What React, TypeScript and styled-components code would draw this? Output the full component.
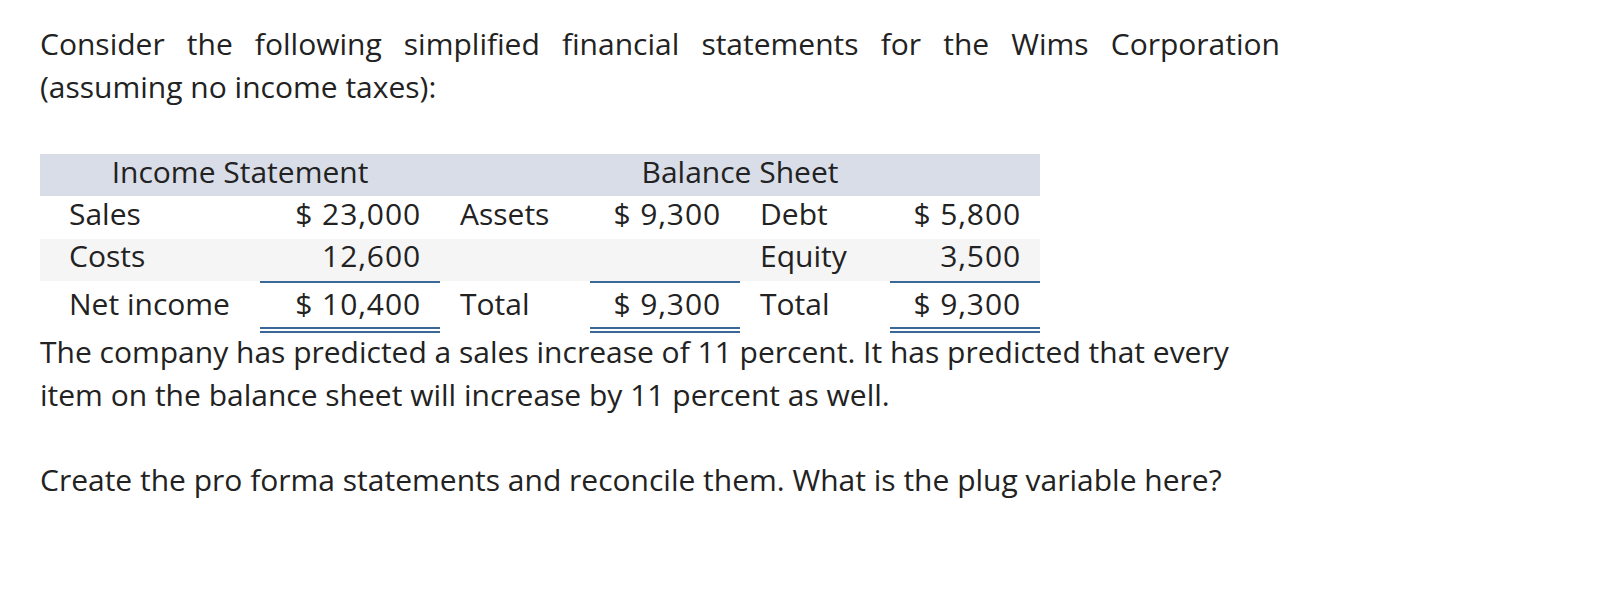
import React from 'react';
import styled, { createGlobalStyle } from 'styled-components';

const GlobalStyle = createGlobalStyle`
  body {
    margin: 0;
    background: #ffffff;
  }
`;

const Page = styled.div`
  width: 1240px;
  padding: 22px 0 0 40px;
  color: #222222;
  font-family: "Open Sans", "Noto Sans", sans-serif;
  font-size: 30px;
  line-height: 43px;
`;

const Paragraph = styled.p<{ $justify?: boolean; $gap?: number }>`
  margin: ${props => props.$gap || 0}px 0 0;
  text-align: ${props => (props.$justify ? 'justify' : 'left')};
`;

const Table = styled.table`
  width: 1000px;
  margin-top: 46px;
  border-collapse: separate;
  border-spacing: 0;
  table-layout: fixed;
  font-size: 30px;
`;

const HeadCell = styled.th`
  background-color: #d9dde8;
  font-weight: 400;
  text-align: center;
  vertical-align: top;
  line-height: 36px;
  padding: 0 0 6px;
`;

const Row = styled.tr<{ $shaded?: boolean }>`
  background-color: ${props => (props.$shaded ? '#f5f5f5' : 'transparent')};
`;

type RowKind = 'first' | 'middle' | 'total';

const rowMetrics: Record<RowKind, { lh: number; top: number; bottom: number }> = {
  first: { lh: 33, top: 1, bottom: 9 },
  middle: { lh: 34, top: 0, bottom: 8 },
  total: { lh: 34, top: 6, bottom: 12 },
};

const Cell = styled.td<{ $kind: RowKind; $amount?: boolean; $indent?: number; $ruled?: boolean }>`
  vertical-align: top;
  white-space: nowrap;
  text-align: ${props => (props.$amount ? 'right' : 'left')};
  letter-spacing: ${props => (props.$amount ? '0.9px' : 'normal')};
  line-height: ${props => rowMetrics[props.$kind].lh}px;
  padding-top: ${props => rowMetrics[props.$kind].top - (props.$ruled ? 2 : 0)}px;
  padding-bottom: ${props => rowMetrics[props.$kind].bottom - (props.$ruled ? 6 : 0)}px;
  padding-left: ${props => (props.$amount ? 0 : props.$indent ?? 20)}px;
  padding-right: ${props => (props.$amount ? 19 : 0)}px;
  border-top: ${props => (props.$ruled ? '2px solid #3a6899' : 'none')};
  border-bottom: ${props => (props.$ruled ? '6px double #3a6899' : 'none')};
`;

export default function App() {
  return (
    <>
      <GlobalStyle />
      <Page>
        <Paragraph $justify>
          Consider the following simplified financial statements for the Wims Corporation (assuming no
          income taxes):
        </Paragraph>

        <Table>
          <colgroup>
            <col style={{ width: 220 }} />
            <col style={{ width: 180 }} />
            <col style={{ width: 150 }} />
            <col style={{ width: 150 }} />
            <col style={{ width: 150 }} />
            <col style={{ width: 150 }} />
          </colgroup>
          <thead>
            <tr>
              <HeadCell colSpan={2}>Income Statement</HeadCell>
              <HeadCell colSpan={4}>Balance Sheet</HeadCell>
            </tr>
          </thead>
          <tbody>
            <Row>
              <Cell $kind="first" $indent={29}>Sales</Cell>
              <Cell $kind="first" $amount>$ 23,000</Cell>
              <Cell $kind="first">Assets</Cell>
              <Cell $kind="first" $amount>$ 9,300</Cell>
              <Cell $kind="first">Debt</Cell>
              <Cell $kind="first" $amount>$ 5,800</Cell>
            </Row>
            <Row $shaded>
              <Cell $kind="middle" $indent={29}>Costs</Cell>
              <Cell $kind="middle" $amount>12,600</Cell>
              <Cell $kind="middle" />
              <Cell $kind="middle" $amount />
              <Cell $kind="middle">Equity</Cell>
              <Cell $kind="middle" $amount>3,500</Cell>
            </Row>
            <Row>
              <Cell $kind="total" $indent={29}>Net income</Cell>
              <Cell $kind="total" $amount $ruled>$ 10,400</Cell>
              <Cell $kind="total">Total</Cell>
              <Cell $kind="total" $amount $ruled>$ 9,300</Cell>
              <Cell $kind="total">Total</Cell>
              <Cell $kind="total" $amount $ruled>$ 9,300</Cell>
            </Row>
          </tbody>
        </Table>

        <Paragraph $gap={-3}>
          The company has predicted a sales increase of 11 percent. It has predicted that every item on
          the balance sheet will increase by 11 percent as well.
        </Paragraph>
        <Paragraph $gap={42}>
          Create the pro forma statements and reconcile them. What is the plug variable here?
        </Paragraph>
      </Page>
    </>
  );
}
